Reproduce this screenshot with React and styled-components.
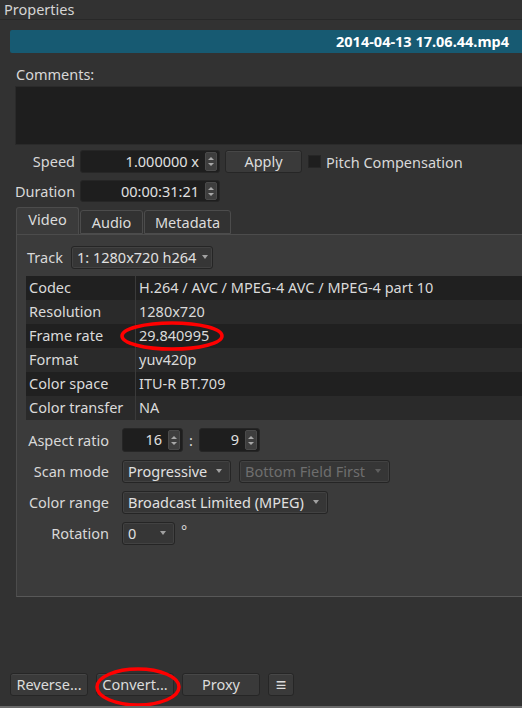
import React from 'react';
import styled, { createGlobalStyle } from 'styled-components';

const Global = createGlobalStyle`
  html, body { margin: 0; padding: 0; background: #323232; }
  body { font-family: "Noto Sans", "Open Sans", sans-serif; font-size: 14.5px; color: #d8d8d8; }
`;

const Root = styled.div`
  position: relative;
  width: 522px;
  height: 708px;
  overflow: hidden;
  background: #323232;
  display: flex;
  flex-direction: column;
  border-bottom: 2px solid #6a6a6a;
  box-sizing: border-box;
`;

const TitleBar = styled.div`
  height: 20px;
  line-height: 18px;
  padding-left: 4px;
  color: #d4d4d4;
  border-bottom: 1px solid #282828;
  box-sizing: border-box;
`;

const FileBar = styled.div`
  margin: 10px 0 0 10px;
  height: 23px;
  background: #175a72;
  border-radius: 2px 0 0 2px;
  color: #fff;
  font-weight: bold;
  text-align: right;
  line-height: 22px;
  padding-right: 13px;
`;

const Body = styled.div`
  padding-left: 15px;
  display: flex;
  flex-direction: column;
`;

const CommentLabel = styled.div`
  margin-top: 11px;
  height: 22px;
  line-height: 21px;
  padding-left: 1px;
`;

const CommentBox = styled.div`
  height: 59px;
  background: #1e1e1e;
  border: 1px solid #2a2a2a;
  border-right: none;
  box-sizing: border-box;
`;

const FormRow = styled.div`
  display: flex;
  align-items: center;
  gap: ${p => p.$gap || 5}px;
  height: ${p => p.$h || 23}px;
  margin-top: ${p => p.$mt || 0}px;
`;

const Label = styled.div`
  width: ${p => p.$w}px;
  text-align: ${p => p.$left ? 'left' : 'right'};
  padding-left: ${p => p.$left ? 1 : 0}px;
  flex-shrink: 0;
  white-space: nowrap;
  margin-top: -1px;
`;

const SpinWrap = styled.div`
  width: ${p => p.$w}px;
  height: 100%;
  background: #1e1e1e;
  border: 1px solid #262626;
  border-radius: 3px;
  box-sizing: border-box;
  display: flex;
  align-items: stretch;
`;

const SpinText = styled.div`
  flex: 1;
  text-align: right;
  padding-right: 6px;
  line-height: 20px;
  color: #e0e0e0;
`;

const SpinArrows = styled.div`
  width: 10px;
  margin: 1px 2px 1px 0;
  background: #3e3e3e;
  border: 1px solid #4a4a4a;
  border-radius: 2px;
  display: flex;
  flex-direction: column;
  align-items: center;
  justify-content: center;
  gap: 3px;
`;

const Tri = styled.span`
  width: 0;
  height: 0;
  border-left: 3px solid transparent;
  border-right: 3px solid transparent;
  ${p => (p.$up ? 'border-bottom: 3px solid #a8a8a8;' : 'border-top: 3px solid #a8a8a8;')}
`;

const Button = styled.div`
  width: ${p => p.$w}px;
  height: 23px;
  box-sizing: border-box;
  background: #3a3a3a;
  border: 1px solid #262626;
  border-radius: 3px;
  box-shadow: inset 0 1px 0 #474747;
  text-align: center;
  line-height: 20px;
  color: #dcdcdc;
  flex-shrink: 0;
`;

const MenuButton = styled(Button)`
  font-weight: bold;
  font-size: 18px;
  line-height: 20px;
`;

const Check = styled.div`
  width: 13px;
  height: 13px;
  background: #1e1e1e;
  border: 1px solid #262626;
  box-sizing: border-box;
  margin-left: 1px;
`;

const TabBar = styled.div`
  display: flex;
  align-items: flex-end;
  gap: 1px;
  margin-top: 6px;
  padding-left: 1px;
  height: 26px;
  position: relative;
  z-index: 1;
`;

const Tab = styled.div`
  height: ${p => (p.$active ? 27 : 24)}px;
  width: ${p => p.$w}px;
  box-sizing: border-box;
  background: ${p => (p.$active ? '#3b3b3b' : '#323232')};
  border: 1px solid #4c4c4c;
  border-bottom: ${p => (p.$active ? 'none' : '1px solid #4c4c4c')};
  border-radius: 3px 3px 0 0;
  text-align: center;
  line-height: ${p => (p.$active ? 23 : 22)}px;
  color: #dcdcdc;
`;

const Pane = styled.div`
  margin-left: 1px;
  height: 363px;
  background: #3b3b3b;
  border: 1px solid #4c4c4c;
  border-right: none;
  border-bottom: 1px solid #585858;
  box-sizing: border-box;
  padding: 11px 0 0 9px;
  display: flex;
  flex-direction: column;
`;

const Combo = styled.div`
  width: ${p => p.$w}px;
  height: 23px;
  box-sizing: border-box;
  background: #363636;
  border: 1px solid #252525;
  border-radius: 3px;
  box-shadow: inset 0 0 0 1px #424242;
  display: flex;
  align-items: center;
  justify-content: space-between;
  padding: 0 8px 1px 5px;
  color: ${p => (p.$disabled ? '#6e6e6e' : '#e0e0e0')};
  white-space: nowrap;
  overflow: hidden;
  flex-shrink: 0;
`;

const ComboArrow = styled.span`
  width: 0;
  height: 0;
  border-left: 3.5px solid transparent;
  border-right: 3.5px solid transparent;
  border-top: 4px solid ${p => (p.$disabled ? '#5e5e5e' : '#a0a0a0')};
  flex-shrink: 0;
  margin-left: 6px;
`;

const ComboPair = styled.div`
  display: flex;
  gap: 8px;
`;

const Table = styled.div`
  margin-top: 7px;
  display: flex;
  flex-direction: column;
`;

const TRow = styled.div`
  display: grid;
  grid-template-columns: 109px 1fr;
  height: 24px;
  background: ${p => (p.$alt ? '#2a2a2a' : '#202020')};
`;

const TCell = styled.div`
  line-height: 23px;
  padding-left: 3px;
  white-space: nowrap;
  color: #dadada;
  & + & {
    border-left: 1px solid #3a3a3a;
  }
`;

const Inner = styled.div`
  display: flex;
  flex-direction: column;
  gap: 8px;
  margin-top: 8px;
  padding-left: 1px;
`;

const RatioGroup = styled.div`
  display: flex;
  align-items: center;
  height: 100%;
`;

const Colon = styled.span`
  width: 16px;
  text-align: center;
`;

const Degree = styled.span`
  margin-top: -8px;
  margin-left: -7px;
`;

const Footer = styled.div`
  margin-top: auto;
  display: flex;
  gap: 8px;
  padding: 0 0 10px 10px;
`;

const Overlay = styled.svg`
  position: absolute;
  left: 0;
  top: 0;
  pointer-events: none;
`;

const Spin = ({ w, value }) => (
  <SpinWrap $w={w}>
    <SpinText>{value}</SpinText>
    <SpinArrows>
      <Tri $up />
      <Tri />
    </SpinArrows>
  </SpinWrap>
);

const Select = ({ w, value, disabled }) => (
  <Combo $w={w} $disabled={disabled}>
    <span>{value}</span>
    <ComboArrow $disabled={disabled} />
  </Combo>
);

const rows = [
  ['Codec', 'H.264 / AVC / MPEG-4 AVC / MPEG-4 part 10'],
  ['Resolution', '1280x720'],
  ['Frame rate', '29.840995'],
  ['Format', 'yuv420p'],
  ['Color space', 'ITU-R BT.709'],
  ['Color transfer', 'NA'],
];

export default function App() {
  return (
    <Root>
      <Global />
      <TitleBar>Properties</TitleBar>
      <FileBar>2014-04-13 17.06.44.mp4</FileBar>
      <Body>
        <CommentLabel>Comments:</CommentLabel>
        <CommentBox />
        <FormRow $mt={5}>
          <Label $w={60}>Speed</Label>
          <Spin w={140} value="1.000000 x" />
          <Button $w={77}>Apply</Button>
          <Check />
          <span>Pitch Compensation</span>
        </FormRow>
        <FormRow $mt={7} $h={22}>
          <Label $w={60}>Duration</Label>
          <Spin w={140} value="00:00:31:21" />
        </FormRow>
        <TabBar>
          <Tab $active $w={63}>Video</Tab>
          <Tab $w={63}>Audio</Tab>
          <Tab $w={87}>Metadata</Tab>
        </TabBar>
        <Pane>
          <FormRow $gap={3}>
            <Label $w={41} $left>Track</Label>
            <Select w={142} value="1: 1280x720 h264" />
          </FormRow>
          <Table>
            {rows.map(([k, v], i) => (
              <TRow key={k} $alt={i % 2 === 1}>
                <TCell>{k}</TCell>
                <TCell>{v}</TCell>
              </TRow>
            ))}
          </Table>
          <Inner>
            <FormRow $gap={13} $h={24}>
              <Label $w={82}>Aspect ratio</Label>
              <RatioGroup>
                <Spin w={61} value="16" />
                <Colon>:</Colon>
                <Spin w={61} value="9" />
              </RatioGroup>
            </FormRow>
            <FormRow $gap={13}>
              <Label $w={82}>Scan mode</Label>
              <ComboPair>
                <Select w={109} value="Progressive" />
                <Select w={151} value="Bottom Field First" disabled />
              </ComboPair>
            </FormRow>
            <FormRow $gap={13}>
              <Label $w={82}>Color range</Label>
              <Select w={206} value="Broadcast Limited (MPEG)" />
            </FormRow>
            <FormRow $gap={13}>
              <Label $w={82}>Rotation</Label>
              <Select w={53} value="0" />
              <Degree>°</Degree>
            </FormRow>
          </Inner>
        </Pane>
      </Body>
      <Footer>
        <Button $w={78}>Reverse...</Button>
        <Button $w={78}>Convert...</Button>
        <Button $w={78}>Proxy</Button>
        <MenuButton $w={26}>≡</MenuButton>
      </Footer>
      <Overlay width="522" height="708">
        <ellipse cx="172" cy="336" rx="50" ry="13" fill="none" stroke="#ff0000" strokeWidth="3.5" />
        <ellipse cx="138" cy="687" rx="41" ry="18" fill="none" stroke="#ff0000" strokeWidth="3.5" />
      </Overlay>
    </Root>
  );
}
